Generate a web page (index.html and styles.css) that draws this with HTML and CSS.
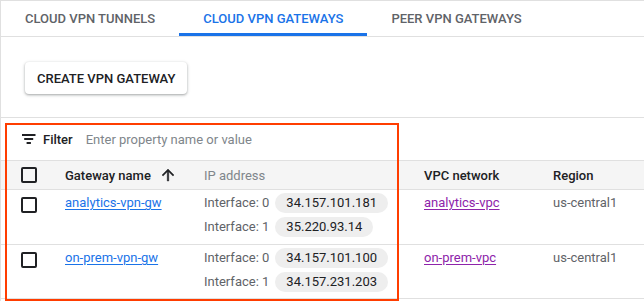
FILE: index.html
```html
<!DOCTYPE html>
<html>
<head>
<meta charset="utf-8">
<link rel="stylesheet" href="styles.css">
</head>
<body>
<div class="page">
  <nav class="tabs">
    <div class="tab">Cloud VPN tunnels</div>
    <div class="tab active">Cloud VPN gateways</div>
    <div class="tab">Peer VPN gateways</div>
  </nav>
  <div class="toolbar">
    <button class="btn">Create VPN gateway</button>
  </div>
  <div class="list">
    <div class="filter">
      <svg class="filter-icon" width="14" height="10" viewBox="0 0 14 10"><rect x="0" y="0" width="13.5" height="2" fill="#202124"/><rect x="2.2" y="4" width="9" height="2" fill="#202124"/><rect x="4.6" y="8" width="4.3" height="2" fill="#202124"/></svg>
      <span class="filter-label">Filter</span>
      <span class="filter-ph">Enter property name or value</span>
    </div>
    <div class="row head">
      <div class="cell check"><span class="box"></span></div>
      <div class="cell">Gateway name <svg class="sort" width="18" height="18" viewBox="0 0 24 24"><path d="M4 12l1.41 1.41L11 7.83V20h2V7.83l5.58 5.59L20 12l-8-8-8 8z" fill="#202124" stroke="#202124" stroke-width="0.6"/></svg></div>
      <div class="cell muted-head">IP address</div>
      <div class="cell">VPC network</div>
      <div class="cell">Region</div>
    </div>
    <div class="row">
      <div class="cell check"><span class="box"></span></div>
      <div class="cell"><a class="link">analytics-vpn-gw</a></div>
      <div class="cell ips">
        <div class="ip"><span class="iface">Interface: 0</span><span class="chip">34.157.101.181</span></div>
        <div class="ip"><span class="iface">Interface: 1</span><span class="chip">35.220.93.14</span></div>
      </div>
      <div class="cell"><a class="link vpc">analytics-vpc</a></div>
      <div class="cell region">us-central1</div>
    </div>
    <div class="row">
      <div class="cell check"><span class="box"></span></div>
      <div class="cell"><a class="link">on-prem-vpn-gw</a></div>
      <div class="cell ips">
        <div class="ip"><span class="iface">Interface: 0</span><span class="chip">34.157.101.100</span></div>
        <div class="ip"><span class="iface">Interface: 1</span><span class="chip">34.157.231.203</span></div>
      </div>
      <div class="cell"><a class="link vpc">on-prem-vpc</a></div>
      <div class="cell region">us-central1</div>
    </div>
  </div>
  <div class="highlight"></div>
</div>
</body>
</html>
```
FILE: styles.css
```css
* { box-sizing: border-box; }
html, body { margin: 0; padding: 0; background: #fff; }
body { font-family: Roboto, "Liberation Sans", sans-serif; font-size: 13px; color: #202124; }
.page { position: relative; width: 644px; height: 301px; border-top: 1px solid #e0e0e0; border-left: 1px solid #e0e0e0; overflow: hidden; }
.tabs { display: flex; height: 36px; border-bottom: 1px solid #e0e0e0; }
.tab { padding: 0 24px; height: 35px; text-transform: uppercase; font-weight: 500; font-size: 13px; color: #5f6368; letter-spacing: 0; border-bottom: 3px solid transparent; line-height: 35px; }
.tab.active { color: #1a73e8; border-bottom-color: #1a73e8; }
.toolbar { height: 81px; padding: 25px 0 0 24px; border-bottom: 1px solid #e0e0e0; }
.btn { height: 32px; padding: 0 12px; border: none; background: #fff; border-radius: 4px; font-family: inherit; font-size: 13px; font-weight: 500; text-transform: uppercase; color: #202124; box-shadow: 0 1px 2px rgba(60,64,67,.3), 0 1px 3px 1px rgba(60,64,67,.15); letter-spacing: 0; }
.filter { height: 42px; display: flex; align-items: center; padding-left: 21px; }
.filter-icon { margin-right: 7px; }
.filter-label { font-weight: 500; margin-right: 13px; }
.filter-ph { color: #80868b; }
.row { display: grid; grid-template-columns: 64px 139px 220px 129px 1fr; border-top: 1px solid #e0e0e0; }
.row:last-of-type { border-bottom: 1px solid #e0e0e0; }
.row.head { height: 29px; background: #f5f5f5; align-items: center; font-weight: 500; }
.row:not(.head) { height: 55px; padding-top: 2px; }
.cell { display: flex; align-items: center; }
.row:not(.head) .cell { align-items: flex-start; line-height: 20px; padding-top: 1px; }
.row:not(.head) .cell.check { padding-top: 5px; }
.check { padding-left: 20px; }
.box { width: 16px; height: 16px; border: 2px solid #202124; border-radius: 2px; display: block; }
.sort { margin-left: 8px; }
.muted-head { color: #80868b; font-weight: 400; }
.ips { flex-direction: column; gap: 4px; }
.ip { display: flex; align-items: center; }
.iface { color: #5f6368; margin-right: 6px; }
.chip { background: #eeeeee; border-radius: 10px; height: 20px; line-height: 20px; padding: 0 11px; color: #202124; }
.link { color: #1a73e8; text-decoration: underline; text-underline-offset: 2px; }
.link.vpc { color: #8e24aa; }
.region { color: #5f6368; }
.highlight { position: absolute; left: 4px; top: 122px; width: 394px; height: 178px; border: 2px solid #ff3d00; }
```
